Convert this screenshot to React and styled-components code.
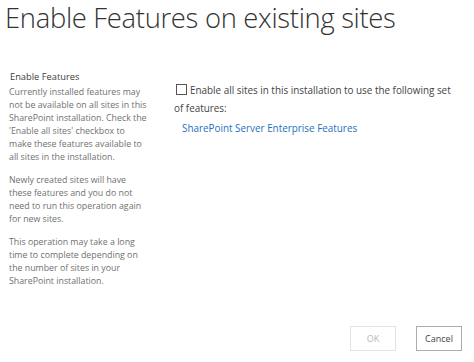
import React from 'react'
import styled, { createGlobalStyle } from 'styled-components'

const GlobalStyle = createGlobalStyle`
  html, body {
    margin: 0;
    padding: 0;
    background: #ffffff;
  }
  body {
    font-family: "Open Sans", "Noto Sans", "Liberation Sans", sans-serif;
    color: #444444;
  }
`

const Page = styled.div`
  width: 474px;
  height: 362px;
  display: flex;
  flex-direction: column;
  overflow: hidden;
`

const Title = styled.h1`
  margin: 0;
  padding: 0 0 0 5px;
  font-size: 27.4px;
  font-weight: 300;
  line-height: 36px;
  color: #333333;
  letter-spacing: -0.3px;
`

const Section = styled.div`
  display: flex;
  padding: 34px 0 0 9px;
  flex: 1;
`

const SideColumn = styled.div`
  width: 156px;
  flex-shrink: 0;
  margin-right: 9px;
`

const SideHeading = styled.div`
  font-size: 9.3px;
  line-height: 14px;
  color: #3c3c3c;
  margin-bottom: 2px;
  padding-left: 1px;
`

const SideText = styled.p`
  margin: 0 0 10px;
  font-size: 8.8px;
  line-height: 13px;
  color: #707070;
`

const Line = styled.span`
  display: block;
  white-space: nowrap;
`

const MainColumn = styled.div`
  flex: 1;
  padding-top: 11px;
  font-size: 9.9px;
  line-height: 18px;
  color: #444444;
`

const CheckLabel = styled.label`
  display: block;
  padding-right: 18px;
`

const Box = styled.span`
  display: inline-block;
  width: 9px;
  height: 9px;
  border: 1px solid #555555;
  vertical-align: -1px;
  margin: 0 3px 0 2px;
  background: #ffffff;
`

const FeatureLink = styled.a`
  display: block;
  margin: 2px 0 0 8px;
  color: #1f6fbf;
  text-decoration: none;
  font-size: 9.9px;
`

const Footer = styled.div`
  display: flex;
  justify-content: flex-end;
  gap: 20px;
  padding: 0 12px 11px 0;
`

const Button = styled.button`
  width: 46px;
  height: 25px;
  padding: 0;
  font-family: inherit;
  font-size: 9px;
  background: #ffffff;
  border: 1px solid ${p => (p.disabled ? '#e2e2e2' : '#ababab')};
  color: ${p => (p.disabled ? '#b9b9b9' : '#444444')};
`

const paragraphs = [
  [
    'Currently installed features may',
    'not be available on all sites in this',
    'SharePoint installation. Check the',
    "'Enable all sites' checkbox to",
    'make these features available to',
    'all sites in the installation.',
  ],
  [
    'Newly created sites will have',
    'these features and you do not',
    'need to run this operation again',
    'for new sites.',
  ],
  [
    'This operation may take a long',
    'time to complete depending on',
    'the number of sites in your',
    'SharePoint installation.',
  ],
]

export default function App() {
  return (
    <Page>
      <GlobalStyle />
      <Title>Enable Features on existing sites</Title>
      <Section>
        <SideColumn>
          <SideHeading>Enable Features</SideHeading>
          {paragraphs.map((lines, i) => (
            <SideText key={i}>
              {lines.map(l => (
                <Line key={l}>{l}</Line>
              ))}
            </SideText>
          ))}
        </SideColumn>
        <MainColumn>
          <CheckLabel>
            <Box />
            Enable all sites in this installation to use the following set of features:
          </CheckLabel>
          <FeatureLink href="#">SharePoint Server Enterprise Features</FeatureLink>
        </MainColumn>
      </Section>
      <Footer>
        <Button disabled>OK</Button>
        <Button>Cancel</Button>
      </Footer>
    </Page>
  )
}
